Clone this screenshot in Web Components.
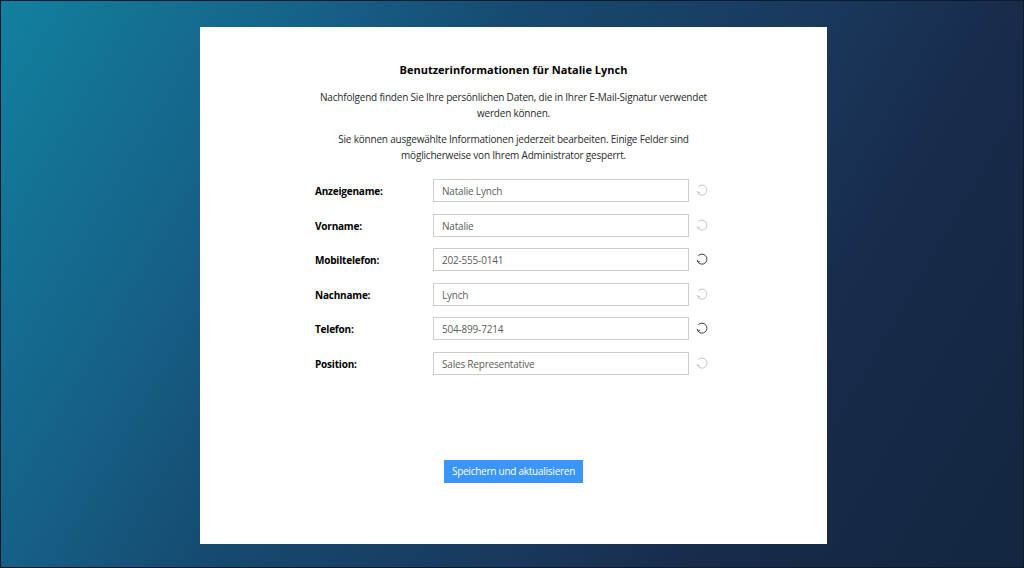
<!DOCTYPE html>
<html><head><meta charset="utf-8"><style>
html,body{margin:0;height:100%}
body{width:1024px;height:568px;overflow:hidden;font-family:"Open Sans","Noto Sans",sans-serif}
</style></head><body>
<template id="t-page"><style>
:host{display:flex;box-sizing:border-box;width:1024px;height:568px;border:1px solid #0d1c2c;background:linear-gradient(120deg,#12809f 0%,#166087 24.3%,#164a70 39%,#19395d 60.9%,#182b4b 75.7%,#12263f 100%);padding:26px 196px 23px 199px}
.card{flex:1;background:#fff;display:flex;flex-direction:column;align-items:center;padding:35px 0 0}
</style><div class="card"><slot></slot></div></template>
<template id="t-intro"><style>
:host{display:block;width:420px;text-align:center;color:#2a2a2a;font-size:10px;letter-spacing:-.2px;line-height:16px;margin-bottom:6px}
h1{font-size:11px;font-weight:700;letter-spacing:0;color:#000;margin:0 0 11px;line-height:16px}
</style><h1><slot name="title"></slot></h1><slot></slot></template>
<template id="t-row"><style>
:host{display:flex;align-items:center;width:397px;height:23px;margin-bottom:11.6px;font-size:10px;letter-spacing:-.2px;line-height:15px}
label{width:118px;font-weight:700;color:#000;padding-top:2px}
.in{box-sizing:border-box;width:256px;height:23px;border:1px solid #cdcdcd;padding:2px 8px 0;display:flex;align-items:center;color:#5c5c5c}
svg{margin:-1px 0 0 7px;width:12px;height:12px;fill:none;stroke:#c4c4c4;stroke-width:1}
:host([active]) svg{stroke:#3c3c3c}
</style><label></label><div class="in"></div>
<svg viewBox="0 0 12 12"><path d="M2.3 2.7A5 5 0 1 1 1.9 9.1"/><path d="M1.2 6.9 1.9 9.1 4.1 8.6"/></svg></template>
<template id="t-btn"><style>
:host{display:block;margin-top:73px;background:#3a96fb;color:#fff;font-size:10px;letter-spacing:-.25px;height:23px;line-height:23px;width:139.5px;text-align:center}
</style><slot></slot></template>
<script>
function mk(name,tpl,init){customElements.define(name,class extends HTMLElement{constructor(){super();const s=this.attachShadow({mode:'open'});s.appendChild(document.getElementById(tpl).content.cloneNode(true));}connectedCallback(){if(init)init(this,this.shadowRoot);}});}
mk('sig-page','t-page');
mk('sig-intro','t-intro');
mk('sig-btn','t-btn');
mk('sig-row','t-row',(h,s)=>{s.querySelector('label').textContent=h.getAttribute('label');s.querySelector('.in').textContent=h.getAttribute('value');});
</script>
<sig-page>
<sig-intro><span slot="title">Benutzerinformationen für Natalie Lynch</span>
<p style="margin:0 0 10px">Nachfolgend finden Sie Ihre persönlichen Daten, die in Ihrer E-Mail-Signatur verwendet werden können.</p>
<p style="margin:0 0 10px">Sie können ausgewählte Informationen jederzeit bearbeiten. Einige Felder sind möglicherweise von Ihrem Administrator gesperrt.</p></sig-intro>
<sig-row label="Anzeigename:" value="Natalie Lynch"></sig-row>
<sig-row label="Vorname:" value="Natalie"></sig-row>
<sig-row label="Mobiltelefon:" value="202-555-0141" active></sig-row>
<sig-row label="Nachname:" value="Lynch"></sig-row>
<sig-row label="Telefon:" value="504-899-7214" active></sig-row>
<sig-row label="Position:" value="Sales Representative"></sig-row>
<sig-btn>Speichern und aktualisieren</sig-btn>
</sig-page>
</body></html>
